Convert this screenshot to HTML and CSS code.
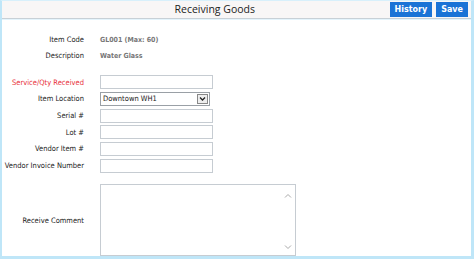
FILE: index.html
```html
<!DOCTYPE html>
<html>
<head>
<meta charset="utf-8">
<link rel="stylesheet" href="styles.css">
</head>
<body>
<div class="frame">
  <div class="header">
    <div class="title">Receiving Goods</div>
    <div class="actions">
      <button class="btn">History</button>
      <button class="btn">Save</button>
    </div>
  </div>
  <div class="form">
    <div class="row info"><div class="label">Item Code</div><div class="value">GL001 (Max: 60)</div></div>
    <div class="row info"><div class="label">Description</div><div class="value">Water Glass</div></div>
    <div class="spacer"></div>
    <div class="row"><div class="label req">Service/Qty Received</div><div class="input"></div></div>
    <div class="row"><div class="label">Item Location</div><div class="select"><span>Downtown WH1</span><span class="caret"><svg width="9" height="7" viewBox="0 0 9 7"><path d="M2 2.5 L4.5 5 L7 2.5" fill="none" stroke="#222" stroke-width="1.3"/></svg></span></div></div>
    <div class="row"><div class="label">Serial #</div><div class="input"></div></div>
    <div class="row"><div class="label">Lot #</div><div class="input"></div></div>
    <div class="row"><div class="label">Vendor Item #</div><div class="input"></div></div>
    <div class="row"><div class="label">Vendor Invoice Number</div><div class="input"></div></div>
    <div class="row comment"><div class="label">Receive Comment</div>
      <div class="textarea"><div class="scroll"><svg width="8" height="6" viewBox="0 0 8 6"><path d="M1 4.5 L4 1.5 L7 4.5" fill="none" stroke="#aaa" stroke-width="1"/></svg><svg width="8" height="6" viewBox="0 0 8 6"><path d="M1 1.5 L4 4.5 L7 1.5" fill="none" stroke="#aaa" stroke-width="1"/></svg></div></div>
    </div>
  </div>
</div>
</body>
</html>
```
FILE: styles.css
```css
html, body { margin: 0; padding: 0; background: #fff; }
body { width: 474px; height: 259px; overflow: hidden; font-family: Tahoma, "DejaVu Sans Condensed", "DejaVu Sans", sans-serif; }
.frame {
  box-sizing: border-box;
  width: 474px; height: 259px;
  border-left: 2px solid #bfe6f8;
  border-right: 3px solid #bfe6f8;
  border-bottom: 3px solid #bfe6f8;
  border-top: 1px solid #d8f0fb;
  display: flex; flex-direction: column;
}
.header {
  height: 18px;
  background: #f8f6f6;
  border-bottom: 1px solid #c8d0d6;
  box-shadow: 0 1px 0 #e4f4fc;
  display: flex; align-items: center; position: relative;
}
.title {
  flex: 1; text-align: center;
  font-family: "Open Sans", sans-serif; font-size: 10.5px; color: #222;
  padding-left: 38px;
}
.actions { display: flex; gap: 4px; padding-right: 3px; align-self: flex-start; padding-top: 1px; }
.btn {
  border: none; background: #1a73d6; color: #fff;
  font-family: "DejaVu Sans", sans-serif; font-weight: bold; font-size: 8px;
  height: 15px; padding: 0 5px; margin: 0;
}
.form { padding-top: 13px; display: flex; flex-direction: column; }
.row { display: flex; align-items: center; height: 16.7px; font-size: 7.5px; color: #222; }
.row.info { height: 16px; }
.spacer { height: 10px; }
.label { width: 82px; text-align: right; padding-right: 16px; white-space: nowrap; font-family: "DejaVu Sans Condensed", "DejaVu Sans", sans-serif; }
.label.req { color: #e8303a; }
.value { color: #777; font-weight: bold; font-size: 7px; font-family: "DejaVu Sans Condensed", "DejaVu Sans", sans-serif; }
.input { box-sizing: border-box; width: 113px; height: 14px; border: 1px solid #c6ccd2; background: #fff; }
.select { box-sizing: border-box; width: 110px; height: 14px; border: 1px solid #9aa0a6; background: #fff; display: flex; align-items: center; justify-content: space-between; padding-left: 2px; font-family: "DejaVu Sans Condensed", "DejaVu Sans", sans-serif; font-size: 7.5px; }
.caret { box-sizing: border-box; width: 11px; height: 10px; border: 1px solid #888; background: #eee; margin-right: 1px; display: flex; align-items: center; justify-content: center; }
.row.comment { height: 72px; margin-top: 10px; align-items: center; }
.textarea { box-sizing: border-box; width: 196px; height: 72px; border: 1px solid #c6ccd2; display: flex; justify-content: flex-end; }
.scroll { width: 14px; display: flex; flex-direction: column; justify-content: space-between; align-items: center; padding: 8px 0 5px; }
```
